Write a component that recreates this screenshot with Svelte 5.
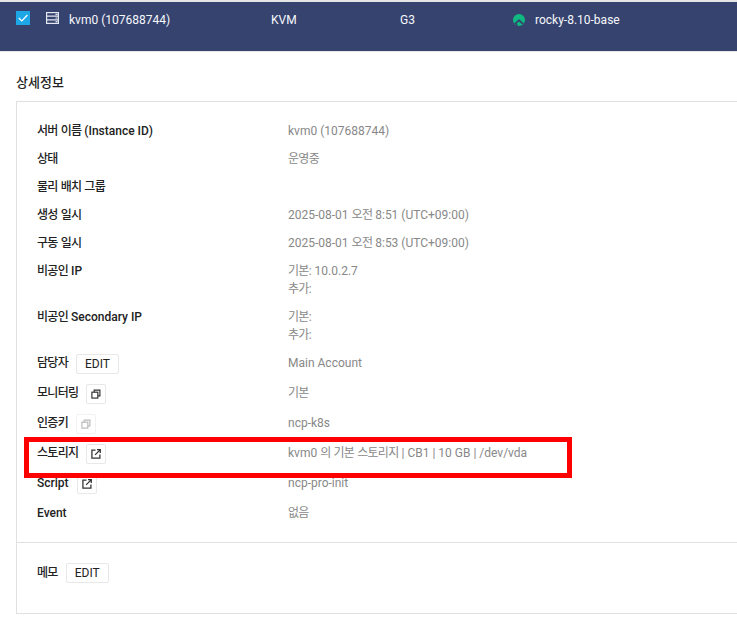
<script>
  const rows = [
    { label: '서버 이름 (Instance ID)', values: ['kvm0 (107688744)'] },
    { label: '상태', values: ['운영중'] },
    { label: '물리 배치 그룹', values: [] },
    { label: '생성 일시', values: ['2025-08-01 오전 8:51 (UTC+09:00)'] },
    { label: '구동 일시', values: ['2025-08-01 오전 8:53 (UTC+09:00)'] },
    { label: '비공인 IP', values: ['기본: 10.0.2.7', '추가:'] },
    { label: '비공인 Secondary IP', values: ['기본:', '추가:'] },
    { label: '담당자', action: 'edit', values: ['Main Account'] },
    { label: '모니터링', action: 'copy', values: ['기본'] },
    { label: '인증키', action: 'copy-off', values: ['ncp-k8s'] },
    { label: '스토리지', action: 'link', values: ['kvm0 의 기본 스토리지 | CB1 | 10 GB | /dev/vda'] },
    { label: 'Script', action: 'link', values: ['ncp-pro-init'] },
    { label: 'Event', values: ['없음'] }
  ]

  // hangul runs get tighter tracking than the latin text around them
  const runs = (text) => text.split(/([\uac00-\ud7a3]+)/).filter(Boolean)
  const isKo = (run) => /[\uac00-\ud7a3]/.test(run)
</script>

{#snippet copyIcon()}
  <svg width="10" height="10" viewBox="0 0 11 11" fill="none" stroke="currentColor" stroke-width="1.3">
    <rect x="1" y="3.5" width="6.5" height="6.5" />
    <path d="M3.5 3.5V1.2h6.3v6.3H7.5" />
  </svg>
{/snippet}

{#snippet linkIcon()}
  <svg width="10" height="10" viewBox="0 0 11 11" fill="none" stroke="currentColor" stroke-width="1.4">
    <path d="M5 1.2H1v8.8h8.8V6" />
    <path d="M4.5 6.5 10 1M6.6 .8H10.2V4.4" />
  </svg>
{/snippet}

{#snippet mixed(text)}
  {#each runs(text) as run}{#if isKo(run)}<span class="ko">{run}</span>{:else}{run}{/if}{/each}
{/snippet}

<div class="page">
  <div class="server-row">
    <span class="checkbox">
      <svg width="10" height="8" viewBox="0 0 10 8" fill="none" stroke="#fff" stroke-width="1.2">
        <path d="M.8 4 3.8 7 9.4 1" />
      </svg>
    </span>
    <svg class="server-icon" width="13" height="12" viewBox="0 0 13 12" fill="none" stroke="#e4e8f2" stroke-width="1.2">
      <rect x=".6" y=".6" width="11.8" height="10.8" />
      <path d="M.6 4.2h11.8M.6 7.8h11.8" />
      <path d="M9.5 2.4h2M9.5 6h2M9.5 9.6h2" />
    </svg>
    <span class="col-name">kvm0 (107688744)</span>
    <span class="col-type">KVM</span>
    <span class="col-gen">G3</span>
    <svg class="rocky" width="12" height="12" viewBox="0 0 12 12">
      <circle cx="6" cy="6" r="6" fill="#10b981" />
      <path d="M1.2 9.6 6 5l4.8 4.6-1.3 1.1L6 7.4l-2.2 2.2 1.4 2.3-1.8-.3z" fill="#36436f" />
    </svg>
    <span class="col-image">rocky-8.10-base</span>
  </div>

  <h2>상세정보</h2>

  <div class="card">
    <div class="details">
      {#each rows as row}
        <div class="row" class:tall={row.action}>
          <div class="label">
            <span>{@render mixed(row.label)}</span>
            {#if row.action === 'edit'}
              <button class="btn">EDIT</button>
            {:else if row.action === 'copy'}
              <button class="btn icon">{@render copyIcon()}</button>
            {:else if row.action === 'copy-off'}
              <button class="btn icon off">{@render copyIcon()}</button>
            {:else if row.action === 'link'}
              <button class="btn icon">{@render linkIcon()}</button>
            {/if}
          </div>
          <div class="value">
            {#each row.values as line}
              <div>{@render mixed(line)}</div>
            {/each}
          </div>
        </div>
      {/each}
    </div>
    <div class="memo">
      <span class="label-text"><span class="ko">메모</span></span>
      <button class="btn">EDIT</button>
    </div>
  </div>

  <div class="highlight"></div>
</div>

<style>
  :global(body) {
    margin: 0;
    background: #fff;
  }
  .page {
    position: relative;
    width: 737px;
    height: 618px;
    overflow: hidden;
    font-family: Roboto, "Noto Sans CJK KR", sans-serif;
    font-size: 12px;
    line-height: 18px;
    color: #222;
  }
  .ko {
    letter-spacing: -0.7px;
  }
  .server-row {
    display: flex;
    align-items: flex-start;
    box-sizing: border-box;
    height: 52px;
    padding-top: 9px;
    background: #36436f;
    border-top: 2px solid #e4e4e4;
    border-bottom: 1px solid #e4e4e4;
    color: #f6f8fc;
  }
  .checkbox {
    display: flex;
    align-items: center;
    justify-content: center;
    width: 14px;
    height: 14px;
    margin: 0 0 0 16px;
    background: #1ea7e6;
  }
  .server-icon {
    margin: 1px 0 0 16px;
  }
  .col-name {
    width: 202px;
    margin-left: 10px;
  }
  .col-type {
    width: 129px;
  }
  .col-gen {
    width: 113px;
  }
  .rocky {
    margin-top: 3px;
  }
  .col-image {
    margin-left: 10px;
  }
  h2 {
    margin: 22px 0 9px 16px;
    font-size: 13px;
    line-height: 18px;
    font-weight: 500;
    color: #222;
  }
  .card {
    box-sizing: border-box;
    width: 760px;
    height: 513px;
    margin-left: 16px;
    border: 1px solid #e0e0e0;
  }
  .details {
    box-sizing: border-box;
    height: 441px;
    padding: 20px 20px 0;
    border-bottom: 1px solid #e0e0e0;
  }
  .row {
    display: flex;
    padding-bottom: 10px;
  }
  .row.tall {
    padding-bottom: 12px;
  }
  .label {
    display: flex;
    align-items: center;
    flex: none;
    gap: 8px;
    width: 251px;
    font-weight: 500;
    height: 18px;
  }
  .label-text {
    font-weight: 500;
  }
  .value {
    color: #888;
    min-height: 18px;
  }
  .btn {
    box-sizing: border-box;
    display: inline-flex;
    align-items: center;
    justify-content: center;
    height: 20px;
    margin: 2px 0 0;
    padding: 0 8px;
    background: #fff;
    border: 1px solid #e8e8e8;
    border-radius: 2px;
    color: #222;
    font: inherit;
    font-weight: 400;
  }
  .btn.icon {
    width: 20px;
    padding: 0;
    color: #333;
  }
  .btn.off {
    border-color: #f2f2f2;
    color: #bbb;
  }
  .memo {
    display: flex;
    align-items: center;
    gap: 8px;
    padding: 19px 20px 0;
  }
  .memo .btn {
    margin: 1px 0 0;
  }
  .highlight {
    position: absolute;
    left: 24px;
    top: 437px;
    width: 548px;
    height: 41px;
    box-sizing: border-box;
    border: 5px solid #f00;
  }
</style>
